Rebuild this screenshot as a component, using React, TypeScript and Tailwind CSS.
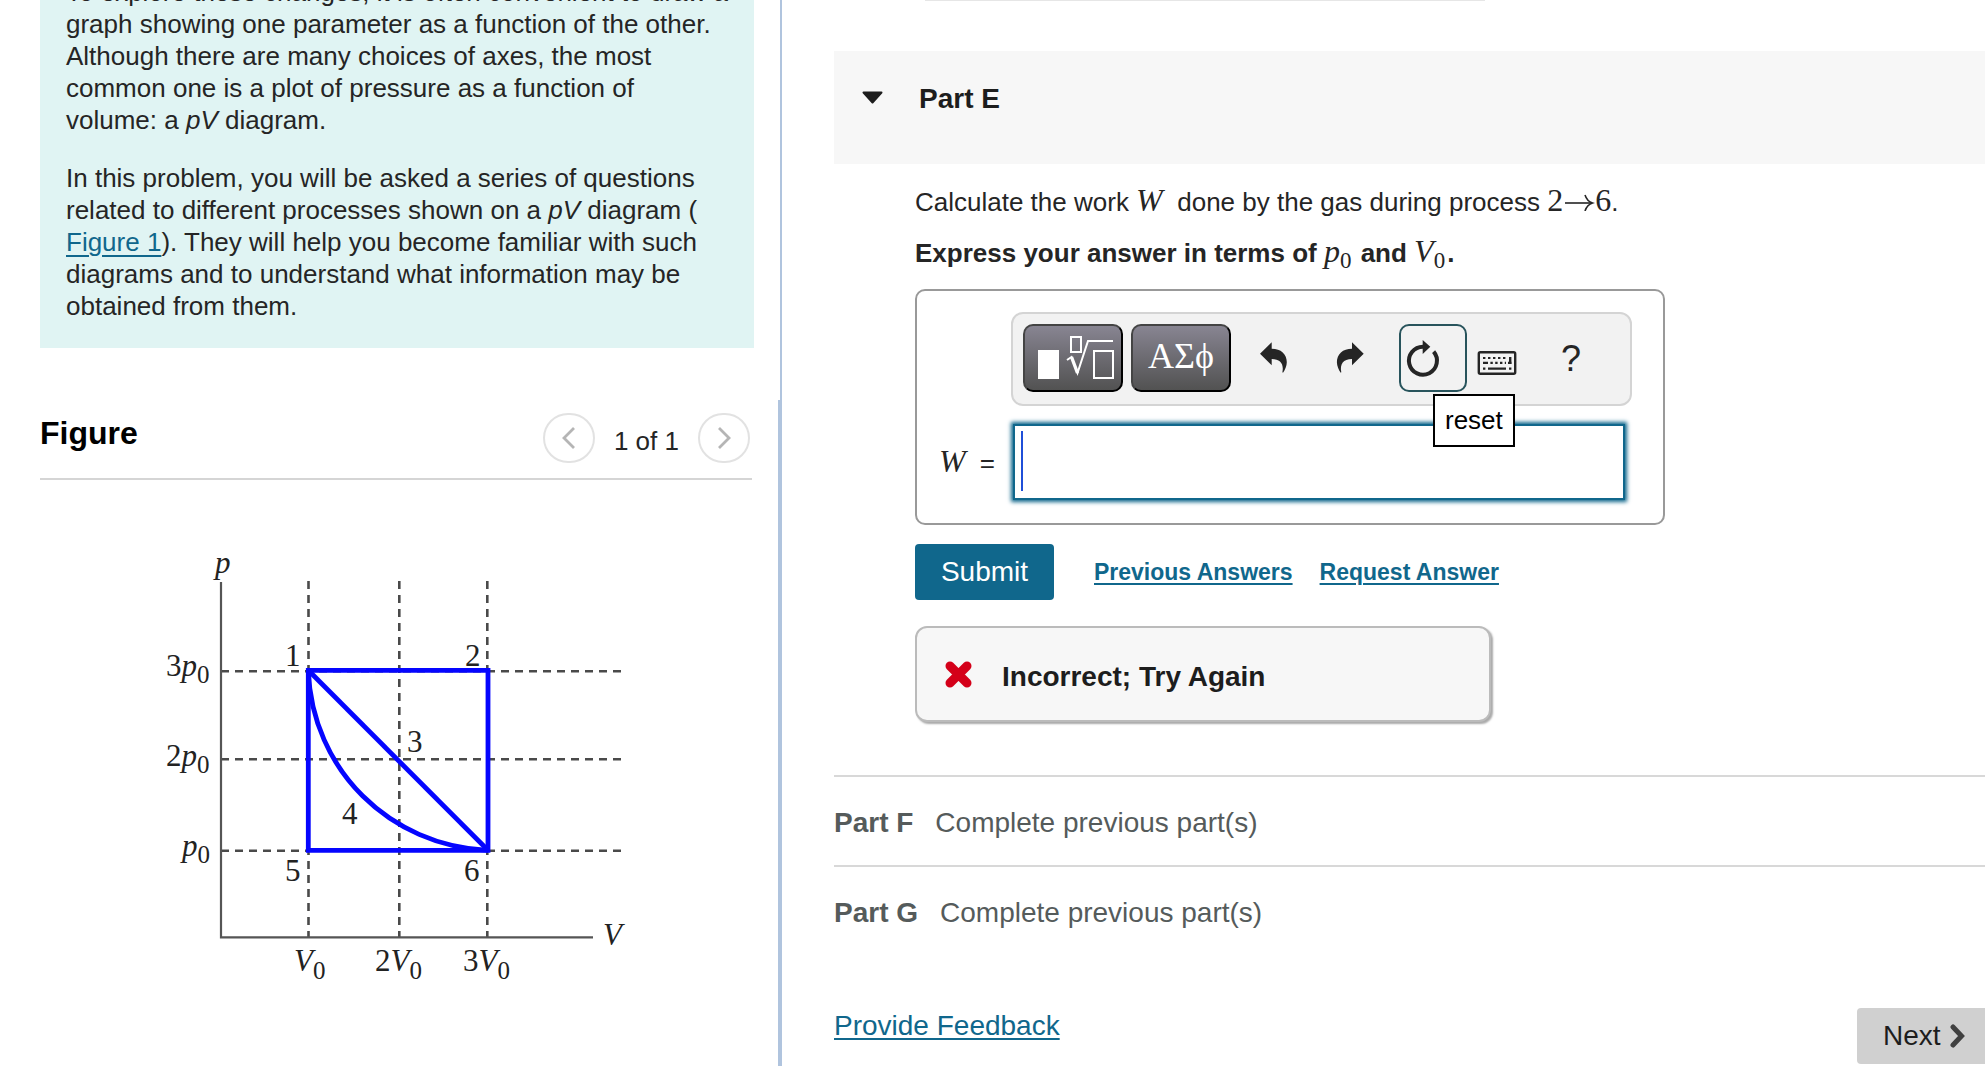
import type { ReactNode } from "react";

type ToolProps = {
  label: string;
  active?: boolean;
  tooltip?: string;
  children: ReactNode;
};

type LockedPart = {
  id: string;
  title: string;
};

const LOCKED_PARTS: LockedPart[] = [
  { id: "F", title: "Part F" },
  { id: "G", title: "Part G" },
];

function MathVar({ children }: { children: ReactNode }) {
  return (
    <span className="font-['Liberation_Serif',serif] text-[32px] leading-none font-normal italic">
      {children}
    </span>
  );
}

function Subscript({ children }: { children: ReactNode }) {
  return (
    <sub className="mr-[2px] font-['Liberation_Serif',serif] text-[23px] leading-none font-normal">
      {children}
    </sub>
  );
}

/** Long thin arrow between two state numbers. */
function ProcessArrow() {
  return (
    <svg
      viewBox="0 0 32 20"
      className="inline h-5 w-8 align-baseline"
      fill="none"
      stroke="currentColor"
      strokeWidth="1.6"
      role="img"
      aria-label="to"
    >
      <path d="M2 12H29" />
      <path d="M22 4C23.5 8.5 26 11 29.5 12 26 13 23.5 15.500 22 20" />
    </svg>
  );
}

/** Toolbar icon button, with an optional tooltip hanging below it. */
function Tool({ label, active, tooltip, children }: ToolProps) {
  return (
    <div className="relative">
      <button
        type="button"
        aria-label={label}
        className={
          active
            ? "flex h-[68px] w-[68px] rounded-[10px] border-2 border-[#28545c] text-[#252525]"
            : "flex h-[68px] w-[68px] rounded-[10px] border-2 border-transparent text-[#252525]"
        }
      >
        {children}
      </button>
      {tooltip && (
        <span
          role="tooltip"
          className="absolute top-[70px] left-[34px] z-10 border-2 border-black bg-white px-[10px] py-2 text-[26px] leading-[33px] text-black"
        >
          {tooltip}
        </span>
      )}
    </div>
  );
}

function ReplyArrow() {
  return (
    <path
      fill="currentColor"
      d="M11 27.7 22.7 16.3V22.7C32 22.7 37.8 28 37.8 36.3 37.8 40 36 44 34 46.7L33.4 46.2C35 38 31.5 33 22.7 33V39.3Z"
    />
  );
}

function KeyboardIcon() {
  return (
    <svg viewBox="0 0 48 64" className="h-16 w-12" fill="none" stroke="currentColor">
      <rect x="1.8" y="26.3" width="36.4" height="21.4" rx="1.5" strokeWidth="2.4" />
      <path strokeWidth="2.2" strokeDasharray="2.4 2.6" d="M6 32H30" />
      <path strokeWidth="2.2" d="M6 36.8H11M31 36.8H34.4M11 42.6H29M6 42.6H8.4M32 42.6H34.4" />
      <path strokeWidth="2.2" strokeDasharray="2.4 2.4" d="M13.4 36.8H29" />
      <path strokeWidth="2.4" d="M33.2 31V38" />
    </svg>
  );
}

/** pV diagram with the processes 1→2→6, 1→3→6, 1→4→6 and 1→5→6. */
function PVDiagram() {
  return (
    <svg
      viewBox="0 0 500 460"
      className="h-[460px] w-[500px]"
      role="img"
      aria-label="pV diagram"
    >
      <g stroke="#4a4a4a" strokeWidth="2.6" strokeDasharray="8 6" fill="none">
        <path d="M168.5 51V407M259.3 51V407M347.3 51V407" />
        <path d="M81 141.3H481M81 229.3H481M81 320.7H481" />
      </g>
      <path d="M81 52V407.4H453" stroke="#555" strokeWidth="2.2" fill="none" />
      <g stroke="#0505ff" strokeWidth="4.8" fill="none">
        <path d="M168.3 140.3H348V320.3H168.3Z" />
        <path d="M168.3 140.3 348 320.3" />
        <path d="M168.3 140.3C172 240 250 316 348 320.3" />
      </g>
      <g fill="#222" fontFamily="Liberation Serif, serif" fontSize="31">
        <text x="75" y="43" fontStyle="italic">p</text>
        <text x="463" y="415" fontStyle="italic">V</text>

        <text x="26" y="146">3<tspan fontStyle="italic">p</tspan><tspan fontSize="25" dy="7">0</tspan></text>
        <text x="26" y="236">2<tspan fontStyle="italic">p</tspan><tspan fontSize="25" dy="7">0</tspan></text>
        <text x="42" y="326"><tspan fontStyle="italic">p</tspan><tspan fontSize="25" dy="7">0</tspan></text>

        <text x="154" y="441"><tspan fontStyle="italic">V</tspan><tspan fontSize="25" dy="8">0</tspan></text>
        <text x="235" y="441">2<tspan fontStyle="italic">V</tspan><tspan fontSize="25" dy="8">0</tspan></text>
        <text x="323" y="441">3<tspan fontStyle="italic">V</tspan><tspan fontSize="25" dy="8">0</tspan></text>

        <text x="145" y="136">1</text>
        <text x="325" y="136">2</text>
        <text x="267" y="222">3</text>
        <text x="202" y="294">4</text>
        <text x="145" y="351">5</text>
        <text x="324" y="351">6</text>
      </g>
    </svg>
  );
}

function PagerButton({ label, d }: { label: string; d: string }) {
  return (
    <button
      type="button"
      aria-label={label}
      className="flex h-[50px] w-[52px] items-center justify-center rounded-full border-2 border-[#e2e2e2]"
    >
      <svg viewBox="0 0 24 24" className="h-6 w-6" fill="none" stroke="#b5b5b5" strokeWidth="2.8">
        <path d={d} />
      </svg>
    </button>
  );
}

function ProblemPanel() {
  return (
    <aside className="flex w-[782px] shrink-0 flex-col">
      <section className="h-[400px] overflow-hidden border-r-2 border-[#b0c4de] pr-[26px] pl-10">
        {/* scrolled: the first line is partly above the fold */}
        <div className="-mt-6 space-y-[26px] bg-[#e0f4f3] pr-4 pb-[26px] pl-[26px] text-[26px] leading-8 text-[#252525]">
          <p>
            To explore these changes, it is often convenient to draw a
            <br />
            graph showing one parameter as a function of the other.
            <br />
            Although there are many choices of axes, the most
            <br />
            common one is a plot of pressure as a function of
            <br />
            volume: a <i>pV</i> diagram.
          </p>
          <p>
            In this problem, you will be asked a series of questions
            <br />
            related to different processes shown on a <i>pV</i> diagram (
            <br />
            <a href="#figure" className="text-[#10678c] underline decoration-2 underline-offset-4">
              Figure 1
            </a>
            ). They will help you become familiar with such
            <br />
            diagrams and to understand what information may be
            <br />
            obtained from them.
          </p>
        </div>
      </section>

      <section id="figure" className="flex-1 border-r-4 border-[#b0c4de] pr-[26px] pl-10">
        <div className="flex items-start justify-between border-b-2 border-[#d5d5d5] pt-[13px] pb-[15px] pr-[2px]">
          <h2 className="text-[32px] leading-10 font-bold text-black">Figure</h2>
          <div className="flex items-center gap-[19px] text-[26px] leading-8 text-[#252525]">
            <PagerButton label="Previous figure" d="M17 2 7 12 17 22" />
            <span className="pt-[6px]">1 of 1</span>
            <PagerButton label="Next figure" d="M7 2 17 12 7 22" />
          </div>
        </div>
        <div className="mt-[50px] ml-[100px]">
          <PVDiagram />
        </div>
      </section>
    </aside>
  );
}

function AnswerBox() {
  return (
    <div className="mt-[22px] h-[236px] w-[750px] rounded-[10px] border-2 border-[#999] pt-[21px] pl-[22px]">
      <div className="ml-[72px] flex h-[94px] w-[621px] gap-2 rounded-xl border-2 border-[#d4d4d4] bg-[#f2f2f2] p-[10px]">
        <button
          type="button"
          aria-label="Templates"
          className="h-[68px] w-[100px] rounded-[10px] border-2 border-t-[#444] border-r-black border-b-black border-l-[#444] bg-gradient-to-b from-[#888592] to-[#525252]"
        >
          <svg viewBox="2 2 96 64" className="h-16 w-24" fill="none" stroke="#fff" strokeWidth="2">
            <rect x="15" y="26" width="21" height="29" fill="#fff" stroke="none" />
            <rect x="48" y="13" width="10" height="15" />
            <rect x="71" y="27" width="19" height="27" />
            <path d="M44 36 48.5 33 54.5 49 65 17H90" />
            <path d="M48.5 33 54.5 49" strokeWidth="3.4" />
          </svg>
        </button>
        <button
          type="button"
          aria-label="Greek symbols"
          className="h-[68px] w-[100px] rounded-[10px] border-2 border-t-[#444] border-r-black border-b-black border-l-[#444] bg-gradient-to-b from-[#888592] to-[#525252] pb-1 font-['Liberation_Serif',serif] text-[36px] leading-10 text-white"
        >
          ΑΣϕ
        </button>
        <div className="ml-2 flex gap-2">
          <Tool label="Undo">
            <svg viewBox="0 0 48 64" className="h-16 w-12">
              <ReplyArrow />
            </svg>
          </Tool>
          <Tool label="Redo">
            <svg viewBox="0 0 48 64" className="h-16 w-12">
              <g transform="translate(49.7 0) scale(-1 1)">
                <ReplyArrow />
              </g>
            </svg>
          </Tool>
          <Tool label="Reset" active tooltip="reset">
            <svg viewBox="0 0 48 64" className="h-16 w-12" fill="none" stroke="currentColor" strokeWidth="4">
              <path d="M22 20.7A14 14 0 1 0 32.6 25.6" />
              <path d="M21.7 14 29.3 20.7 21.7 28Z" fill="currentColor" stroke="none" />
            </svg>
          </Tool>
          <Tool label="Keyboard shortcuts">
            <KeyboardIcon />
          </Tool>
          <Tool label="Help">
            <span className="pt-[10px] pl-2 text-[36px] leading-[46px]">?</span>
          </Tool>
        </div>
      </div>

      <div className="mt-[18px] flex items-center">
        <label htmlFor="answer" className="flex w-[74px] items-baseline gap-[14px] text-[26px] leading-8 text-[#252525]">
          <MathVar>W</MathVar>=
        </label>
        <div className="relative">
          <input
            id="answer"
            type="text"
            className="block h-[76px] w-[612px] border-2 border-[#10678c] px-2 text-[26px] shadow-[0_0_4px_2px_#10678c] outline-none"
          />
          <span className="absolute top-[7px] left-2 h-[60px] w-[2px] bg-[#1f4fd8]" />
        </div>
      </div>
    </div>
  );
}

function PartE() {
  return (
    <section>
      <h2 className="mt-[50px] flex h-[113px] items-start bg-[#f7f7f7] pt-8 pl-7">
        <button type="button" className="flex items-center gap-9 text-[28px] leading-8 font-bold text-[#1d1d1d]">
          <svg viewBox="0 0 21 16" className="h-4 w-[21px]">
            <path
              d="M1.5 1.5H19.5L10.5 11.5Z"
              fill="#1d1d1d"
              stroke="#1d1d1d"
              strokeWidth="2"
              strokeLinejoin="round"
            />
          </svg>
          Part E
        </button>
      </h2>

      <div className="pl-[81px] text-[26px] text-[#252525]">
        <p className="mt-5 h-8 leading-8">
          Calculate the work <MathVar>W</MathVar>&nbsp; done by the gas during process{" "}
          <span className="font-['Liberation_Serif',serif] text-[32px] leading-none">
            2<ProcessArrow />6
          </span>
          .
        </p>
        <p className="mt-[19px] h-8 leading-8 font-bold">
          Express your answer in terms of <MathVar>p</MathVar>
          <Subscript>0</Subscript> and <MathVar>V</MathVar>
          <Subscript>0</Subscript>.
        </p>

        <AnswerBox />

        <div className="mt-[19px] flex items-center">
          <button type="button" className="h-14 w-[139px] rounded bg-[#10678c] text-[28px] leading-8 text-white">
            Submit
          </button>
          <div className="ml-10 flex gap-[27px] text-[23px] leading-7 font-bold text-[#10678c]">
            <a href="#previous" className="underline decoration-2 underline-offset-3">
              Previous Answers
            </a>
            <a href="#request" className="underline decoration-2 underline-offset-3">
              Request Answer
            </a>
          </div>
        </div>

        <div
          role="status"
          className="mt-[26px] flex h-24 w-[576px] items-center gap-[30px] rounded-xl border-2 border-[#bbb] bg-[#f7f7f7] pl-7 text-[28px] leading-8 font-bold text-[#1d1d1d] shadow-[2px_2px_2px_#aaa]"
        >
          <svg viewBox="0 0 27 27" className="h-[27px] w-[27px]">
            <path
              d="M5 5 22 22M22 5 5 22"
              stroke="#d40019"
              strokeWidth="9"
              strokeLinecap="round"
            />
          </svg>
          <span className="pt-[6px]">Incorrect; Try Again</span>
        </div>
      </div>
    </section>
  );
}

export default function App() {
  return (
    <div className="flex bg-white font-['Liberation_Sans',Arial,sans-serif]">
      <ProblemPanel />

      <main className="min-w-0 flex-1 pl-[52px]">
        {/* lower edge of the Part D feedback box */}
        <div className="ml-[91px] h-px w-[560px] bg-[#e6e6e6]" />

        <PartE />

        <div className="mt-[53px]">
          {LOCKED_PARTS.map((part) => (
            <section
              key={part.id}
              className="flex h-[90px] items-center gap-[22px] border-t-2 border-[#d8d8d8] pt-[3px] text-[28px] leading-8 text-[#555b5b]"
            >
              <h2 className="font-bold">{part.title}</h2>
              <p>Complete previous part(s)</p>
            </section>
          ))}
        </div>

        <footer className="mt-[53px] mb-[2px] flex items-start justify-between text-[28px] leading-8">
          <a href="#feedback" className="pt-[2px] text-[#10678c] underline decoration-2 underline-offset-3">
            Provide Feedback
          </a>
          <button
            type="button"
            className="flex h-14 w-32 items-center gap-[9px] rounded-l bg-[#d0d0d0] pl-[26px] text-[#1d1d1d]"
          >
            Next
            <svg viewBox="0 0 16 24" className="h-6 w-4" fill="none" stroke="#404040" strokeWidth="5">
              <path d="M3 3 11.5 12 3 21" strokeLinecap="round" />
            </svg>
          </button>
        </footer>
      </main>
    </div>
  );
}
